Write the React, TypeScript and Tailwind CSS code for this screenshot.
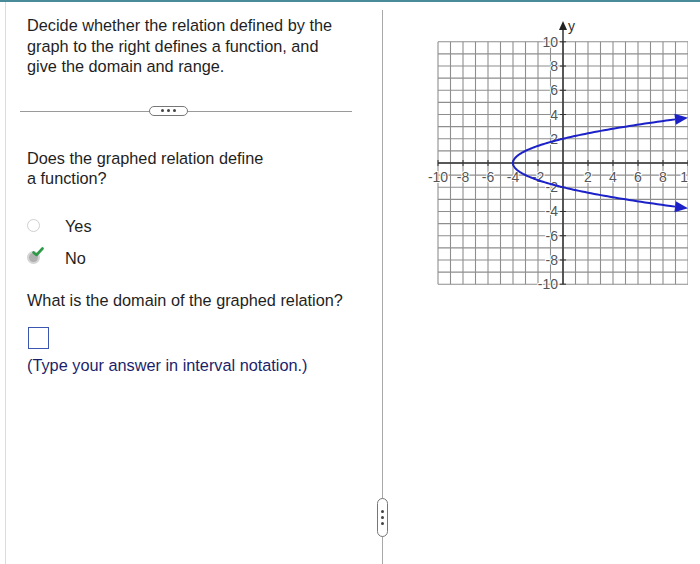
import React from 'react'

const X = (x: number) => 563 + 12.5 * x
const Y = (y: number) => 163 - 12.12 * y

const BLUE = '#1c22c8'

function arrowHead(t: number) {
  // tip of the parabola x = y^2 - 4 at x = 10
  const tx = X(t * t - 4)
  const ty = Y(t)
  let dx = 12.5 * 2 * Math.abs(t)
  let dy = -12.12 * Math.sign(t)
  const len = Math.hypot(dx, dy)
  dx /= len
  dy /= len
  const bx = tx - 13 * dx
  const by = ty - 13 * dy
  const nx = -dy
  const ny = dx
  return `${tx},${ty} ${bx + 5.5 * nx},${by + 5.5 * ny} ${bx - 5.5 * nx},${by - 5.5 * ny}`
}

function Graph() {
  const units = Array.from({ length: 21 }, (_, i) => i - 10)
  const evens = units.filter((u) => u % 2 === 0 && u !== 0)
  const pts: string[] = []
  for (let t = -3.6; t <= 3.6001; t += 0.05) {
    pts.push(`${X(t * t - 4).toFixed(2)},${Y(t).toFixed(2)}`)
  }
  const tEnd = Math.sqrt(14)
  const label = { fontFamily: '"Liberation Sans", Arial, sans-serif', fontSize: 14, fill: '#555' }

  return (
    <svg width={268} height={300} viewBox="420 2 268 300" className="block">
      {units.map((u) => (
        <line key={'v' + u} x1={X(u)} y1={Y(10)} x2={X(u)} y2={Y(-10)} stroke="#8e8e8e" strokeWidth={1.1} />
      ))}
      {units.map((u) => (
        <line key={'h' + u} x1={X(-10)} y1={Y(u)} x2={X(10)} y2={Y(u)} stroke="#8e8e8e" strokeWidth={1.1} />
      ))}
      {/* axes */}
      <line x1={X(-10)} y1={Y(0)} x2={X(10)} y2={Y(0)} stroke="#333" strokeWidth={1.5} />
      <line x1={X(0)} y1={Y(-10)} x2={X(0)} y2={28} stroke="#333" strokeWidth={1.5} />
      <polygon points={`${X(0)},21 ${X(0) - 4},30 ${X(0) + 4},30`} fill="#222" />
      <text x={X(0) + 5} y={31} style={{ ...label, fill: '#333' }}>
        y
      </text>
      {evens.map((u) => (
        <line key={'tx' + u} x1={X(u)} y1={Y(0) - 3} x2={X(u)} y2={Y(0) + 3} stroke="#333" strokeWidth={1} />
      ))}
      {evens.map((u) => (
        <line key={'ty' + u} x1={X(0) - 3} y1={Y(u)} x2={X(0) + 3} y2={Y(u)} stroke="#333" strokeWidth={1} />
      ))}
      {evens.map((u) => (
        <text
          key={'lx' + u}
          x={X(u)}
          y={Y(0) + 19}
          textAnchor="middle"
          stroke="#fff"
          strokeWidth={2}
          paintOrder="stroke"
          style={label}
        >
          {u < 0 ? '-' + Math.abs(u) : u}
        </text>
      ))}
      {evens.map((u) => (
        <text
          key={'ly' + u}
          x={X(0) - 5}
          y={Y(u) + 5}
          textAnchor="end"
          stroke="#fff"
          strokeWidth={2}
          paintOrder="stroke"
          style={label}
        >
          {u < 0 ? '-' + Math.abs(u) : u}
        </text>
      ))}
      {/* relation x = y^2 - 4 */}
      <polyline points={pts.join(' ')} fill="none" stroke={BLUE} strokeWidth={2} />
      <polygon points={arrowHead(tEnd)} fill={BLUE} />
      <polygon points={arrowHead(-tEnd)} fill={BLUE} />
    </svg>
  )
}

function Pill({ vertical }: { vertical?: boolean }) {
  return (
    <div
      className={`flex items-center justify-center gap-[3px] rounded-full border border-[#777] bg-white ${
        vertical ? 'h-[39px] w-[11px] flex-col' : 'h-[10px] w-[39px]'
      }`}
    >
      <span className="h-[3px] w-[3px] rounded-full bg-[#444]" />
      <span className="h-[3px] w-[3px] rounded-full bg-[#444]" />
      <span className="h-[3px] w-[3px] rounded-full bg-[#444]" />
    </div>
  )
}

export default function App() {
  return (
    <div
      className="h-[564px] w-[700px] overflow-hidden bg-white text-[#1f1f1f]"
      style={{ fontFamily: '"Liberation Sans", Arial, sans-serif' }}
    >
      <div className="h-[2px] bg-[#4a8b99]" />
      <div className="flex h-[562px]">
        <div className="w-[6px] border-r border-[#dcdcdc]" />

        {/* left question panel */}
        <div className="w-[376px] text-[16.3px]">
          <p className="mt-[13px] pl-[21px] leading-[20.5px]">
            Decide whether the relation defined by the
            <br />
            graph to the right defines a function, and
            <br />
            give the domain and range.
          </p>

          <div className="relative mt-[34px] ml-[14px] h-px w-[332px] bg-[#9a9a9a]">
            <div className="absolute left-[129px] top-[-5px]">
              <Pill />
            </div>
          </div>

          <p className="mt-[36px] pl-[21px] leading-[20px]">
            Does the graphed relation define
            <br />
            a function?
          </p>

          <div className="mt-[28px] flex h-[20px] items-center pl-[21px] leading-[20px]">
            <span className="h-[13px] w-[13px] rounded-full border-[1.5px] border-[#cfcfcf]" />
            <span className="ml-[25px] mt-[1px]">Yes</span>
          </div>
          <div className="mt-[12px] flex h-[20px] items-center pl-[21px] leading-[20px]">
            <span className="relative h-[13px] w-[13px] rounded-full border-[2px] border-[#d4d4d4] bg-[#b0b0b0]">
              <svg className="absolute left-[3px] top-[-6px]" width="12" height="10" viewBox="0 0 12 10">
                <path d="M1.5 5.5 L4.5 8 L10.5 1.5" fill="none" stroke="#2c9a48" strokeWidth="2.6" strokeLinecap="round" strokeLinejoin="round" />
              </svg>
            </span>
            <span className="ml-[25px] mt-[1px]">No</span>
          </div>

          <p className="mt-[22px] pl-[21px] leading-[20px]">What is the domain of the graphed relation?</p>

          <div className="mt-[17px] ml-[22px] h-[22px] w-[21px] border border-[#3a56b0]" />

          <p className="mt-[6px] pl-[21px] leading-[20px] text-[#1b1f6b]">(Type your answer in interval notation.)</p>
        </div>

        {/* vertical divider */}
        <div className="relative mt-[8px] w-px bg-[#a8a8a8]">
          <div className="absolute left-[-5px] top-[488px]">
            <Pill vertical />
          </div>
        </div>

        {/* graph panel */}
        <div className="ml-[37px]">
          <Graph />
        </div>
      </div>
    </div>
  )
}
